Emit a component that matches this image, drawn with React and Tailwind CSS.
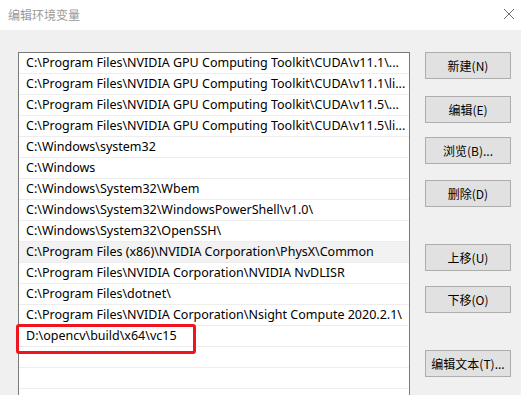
import React from "react";

const rows = [
  "C:\\Program Files\\NVIDIA GPU Computing Toolkit\\CUDA\\v11.1\\...",
  "C:\\Program Files\\NVIDIA GPU Computing Toolkit\\CUDA\\v11.1\\li...",
  "C:\\Program Files\\NVIDIA GPU Computing Toolkit\\CUDA\\v11.5\\...",
  "C:\\Program Files\\NVIDIA GPU Computing Toolkit\\CUDA\\v11.5\\li...",
  "C:\\Windows\\system32",
  "C:\\Windows",
  "C:\\Windows\\System32\\Wbem",
  "C:\\Windows\\System32\\WindowsPowerShell\\v1.0\\",
  "C:\\Windows\\System32\\OpenSSH\\",
  "C:\\Program Files (x86)\\NVIDIA Corporation\\PhysX\\Common",
  "C:\\Program Files\\NVIDIA Corporation\\NVIDIA NvDLISR",
  "C:\\Program Files\\dotnet\\",
  "C:\\Program Files\\NVIDIA Corporation\\Nsight Compute 2020.2.1\\",
  "D:\\opencv\\build\\x64\\vc15",
  "",
  "",
  "",
];

const buttons = [
  { label: "新建(N)", mt: "mt-0" },
  { label: "编辑(E)", mt: "mt-[17px]" },
  { label: "浏览(B)...", mt: "mt-[14px]" },
  { label: "删除(D)", mt: "mt-[16px]" },
  { label: "上移(U)", mt: "mt-[37px]" },
  { label: "下移(O)", mt: "mt-[15px]" },
  { label: "编辑文本(T)...", mt: "mt-[37px]" },
];

export default function App() {
  return (
    <div
      className="relative w-[521px] h-[395px] overflow-hidden bg-[#f0f0f0]"
      style={{ fontFamily: '"Segoe UI", "Noto Sans", "Noto Sans CJK SC", sans-serif' }}
    >
      <div className="h-[30px] bg-white flex items-center justify-between pl-[8px] pr-[6px]">
        <span
          className="text-[12px] text-[#9a9a9a] leading-none"
          style={{ fontFamily: '"Noto Sans CJK SC", sans-serif' }}
        >
          编辑环境变量
        </span>
        <svg width="12" height="12" viewBox="0 0 12 12" className="mb-[2px]">
          <path d="M1 1 L11 11 M11 1 L1 11" stroke="#707070" strokeWidth="1" fill="none" />
        </svg>
      </div>
      <div className="flex pt-[22px] pl-[18px]">
        <div className="w-[392px] h-[400px] border border-[#7a7a7a] bg-white overflow-hidden">
          {rows.map((r, i) => (
            <div
              key={i}
              className={`h-[21px] border-b border-[#ededed] pl-[7px] flex items-center whitespace-nowrap overflow-hidden text-[12.5px] text-black ${
                i === 9 ? "bg-[#f2f2f2]" : ""
              }`}
            >
              {r}
            </div>
          ))}
        </div>
        <div className="flex flex-col ml-[15px]">
          {buttons.map((b, i) => (
            <div
              key={i}
              className={`${b.mt} w-[86px] h-[27px] border border-[#adadad] bg-[#e1e1e1] flex items-center justify-center text-[12px] text-black`}
              style={{ fontFamily: '"Noto Sans CJK SC", sans-serif' }}
            >
              {b.label}
            </div>
          ))}
        </div>
      </div>
      <div className="absolute left-[16px] top-[324px] w-[180px] h-[30px] border-[3px] border-[#f0141e] rounded-[3px]" />
    </div>
  );
}
